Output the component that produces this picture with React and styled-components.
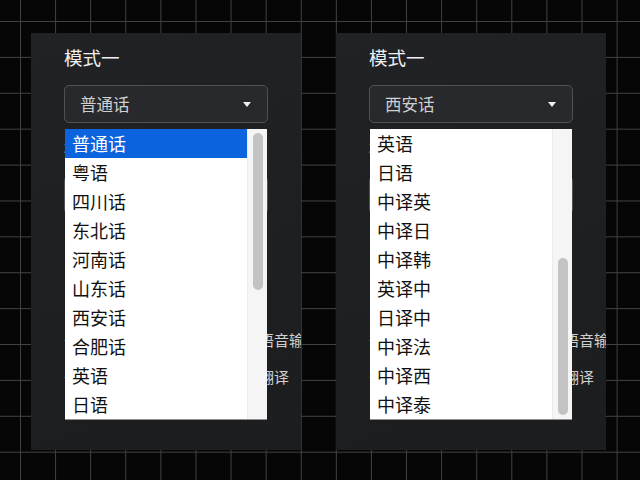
import React from "react";
import styled, { createGlobalStyle } from "styled-components";

const GlobalStyle = createGlobalStyle`
    html, body {
        margin: 0;
        padding: 0;
        background: #060606;
    }
    body {
        font-family: "Noto Sans CJK SC", "Noto Sans", sans-serif;
    }
`;

const OPTIONS = [
    "普通话",
    "粤语",
    "四川话",
    "东北话",
    "河南话",
    "山东话",
    "西安话",
    "合肥话",
    "英语",
    "日语",
    "中译英",
    "中译日",
    "中译韩",
    "英译中",
    "日译中",
    "中译法",
    "中译西",
    "中译泰",
];

const VISIBLE = 10;
const ITEM_H = 29;

function Dropdown({ selected, offset }) {
    const shown = OPTIONS.slice(offset, offset + VISIBLE);
    // scrollbar thumb, sized and placed from the list window
    const trackInner = VISIBLE * ITEM_H - 8;
    const thumbH = (trackInner * VISIBLE) / OPTIONS.length;
    const thumbTop =
        ((trackInner - thumbH) * offset) / (OPTIONS.length - VISIBLE);
    return (
        <ListBox>
            <Items>
                {shown.map((o) => (
                    <Item key={o} active={o === selected}>
                        {o}
                    </Item>
                ))}
            </Items>
            <Track>
                <Thumb style={{ height: thumbH, marginTop: thumbTop }} />
            </Track>
        </ListBox>
    );
}

function ModePanel({ selected, offset }) {
    return (
        <Panel>
            <Title>模式一</Title>
            <SelectWrap>
                <Select>
                    <span>{selected}</span>
                    <Caret />
                </Select>
                <Dropdown selected={selected} offset={offset} />
            </SelectWrap>
            <Title $gap={12}>模式二</Title>
            <Select>
                <span>日语</span>
                <Caret />
            </Select>
            <OptionRow $gap={115}>开启后系统将自动识别并切换语音输入</OptionRow>
            <OptionRow $gap={15}>开启后识别内容将实时同步并翻译</OptionRow>
        </Panel>
    );
}

export default function App() {
    return (
        <>
            <GlobalStyle />
            <Page>
                <ModePanel selected="普通话" offset={0} />
                <ModePanel selected="西安话" offset={8} />
            </Page>
        </>
    );
}

const Page = styled.div`
    display: flex;
    align-items: flex-start;
    gap: 35px;
    box-sizing: border-box;
    width: 640px;
    height: 480px;
    padding: 33px 0 0 31px;
    overflow: hidden;
    background-color: #060606;
    background-image: linear-gradient(to right, #424242 1px, transparent 1px),
        linear-gradient(to bottom, #424242 1px, transparent 1px);
    background-size: 35.1px 35.9px;
    background-position: 20px 21px;
`;

const Panel = styled.div`
    display: flex;
    flex-direction: column;
    box-sizing: border-box;
    width: 270px;
    height: 417px;
    padding: 11px 34px 0 33px;
    background: linear-gradient(160deg, #212225 0%, #1c1d1f 100%);
    overflow: hidden;
`;

const Title = styled.div`
    margin-top: ${(p) => p.$gap || 0}px;
    font-size: 18.5px;
    line-height: 26px;
    color: #f0f0f0;
`;

const SelectWrap = styled.div`
    position: relative;
    z-index: 2;
`;

const Select = styled.div`
    display: flex;
    align-items: center;
    justify-content: space-between;
    box-sizing: border-box;
    width: 204px;
    height: 38px;
    margin-top: 15px;
    padding: 0 16px 0 15px;
    border: 1px solid #505256;
    border-radius: 5px;
    background: #27292c;
    font-size: 16.5px;
    color: #d0d0d0;
`;

const Caret = styled.i`
    width: 0;
    height: 0;
    border-left: 4px solid transparent;
    border-right: 4px solid transparent;
    border-top: 5px solid #f2f2f2;
`;

const ListBox = styled.div`
    position: absolute;
    top: calc(100% + 6px);
    left: 1px;
    display: flex;
    box-sizing: border-box;
    width: 202px;
    height: ${VISIBLE * ITEM_H + 1}px;
    background: #ffffff;
    border-bottom: 1px solid #8f8f8f;
    overflow: hidden;
`;

const Items = styled.div`
    display: flex;
    flex-direction: column;
    flex: 1;
`;

const Item = styled.div`
    height: ${ITEM_H}px;
    padding-left: 7px;
    font-size: 18px;
    line-height: ${ITEM_H}px;
    color: ${(p) => (p.active ? "#ffffff" : "#111111")};
    background: ${(p) => (p.active ? "#0b63de" : "transparent")};
`;

const Track = styled.div`
    display: flex;
    flex-direction: column;
    align-items: center;
    box-sizing: border-box;
    width: 20px;
    padding-top: 4px;
    background: #f5f5f5;
    border-left: 1px solid #ebebeb;
`;

const Thumb = styled.div`
    width: 10px;
    border-radius: 5px;
    background: #c3c3c3;
`;

const OptionRow = styled.div`
    margin-top: ${(p) => p.$gap || 0}px;
    font-size: 15px;
    line-height: 22px;
    color: #d0d0d0;
    white-space: nowrap;
`;
